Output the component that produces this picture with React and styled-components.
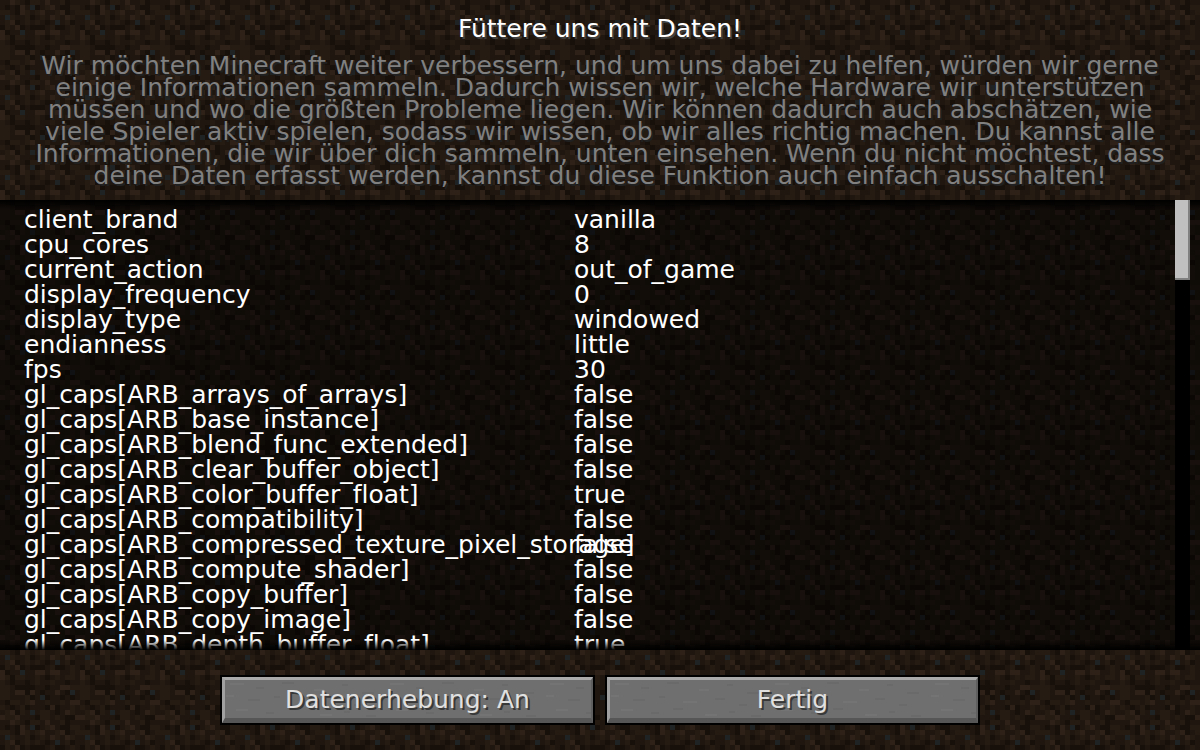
import { useState } from "react";
import styled, { createGlobalStyle } from "styled-components";

const dirt = [
    "bbdcbaccbdbbcabb",
    "babadbgabcdbaacc",
    "ccbadcbcdbbcdabc",
    "bgcbbcabcbdcbdcb",
    "bcdabcbcbabgbcab",
    "acbdabaaabcaabcb",
    "dabbgbbddbddbbcb",
    "dcaccbbcbabcbccb",
    "cbabbabcbbcbbabb",
    "ccbaaaabbabbddcc",
    "ccbddadbabbdbagb",
    "ccbbbcabgabbabab",
    "baccbcdbbcbbcbdd",
    "cbabcabbbadabbcb",
    "bcdacbgbccbabdcb",
    "dccdbbbaccbcbaad",
];

const dirtColors = {
    a: "#170f0a",
    b: "#1e160f",
    c: "#261b12",
    d: "#2e2118",
    g: "#1f2324",
};

const grains = [
    [8, 6, 14], [34, 10, 8], [60, 5, 12], [92, 12, 10], [120, 7, 6], [140, 15, 12],
    [4, 18, 8], [26, 22, 12], [52, 19, 6], [76, 24, 14], [108, 21, 10], [132, 27, 8],
    [14, 32, 12], [44, 35, 8], [66, 31, 10], [98, 37, 12], [122, 34, 6], [144, 38, 10],
];

const rows = [
    ["client_brand", "vanilla"],
    ["cpu_cores", "8"],
    ["current_action", "out_of_game"],
    ["display_frequency", "0"],
    ["display_type", "windowed"],
    ["endianness", "little"],
    ["fps", "30"],
    ["gl_caps[ARB_arrays_of_arrays]", "false"],
    ["gl_caps[ARB_base_instance]", "false"],
    ["gl_caps[ARB_blend_func_extended]", "false"],
    ["gl_caps[ARB_clear_buffer_object]", "false"],
    ["gl_caps[ARB_color_buffer_float]", "true"],
    ["gl_caps[ARB_compatibility]", "false"],
    ["gl_caps[ARB_compressed_texture_pixel_storage]", "false"],
    ["gl_caps[ARB_compute_shader]", "false"],
    ["gl_caps[ARB_copy_buffer]", "false"],
    ["gl_caps[ARB_copy_image]", "false"],
    ["gl_caps[ARB_depth_buffer_float]", "true"],
];

const intro = [
    "Wir möchten Minecraft weiter verbessern, und um uns dabei zu helfen, würden wir gerne",
    "einige Informationen sammeln. Dadurch wissen wir, welche Hardware wir unterstützen",
    "müssen und wo die größten Probleme liegen. Wir können dadurch auch abschätzen, wie",
    "viele Spieler aktiv spielen, sodass wir wissen, ob wir alles richtig machen. Du kannst alle",
    "Informationen, die wir über dich sammeln, unten einsehen. Wenn du nicht möchtest, dass",
    "deine Daten erfasst werden, kannst du diese Funktion auch einfach ausschalten!",
];

function DirtTexture() {
    return (
        <Texture aria-hidden="true" shapeRendering="crispEdges">
            <defs>
                <pattern id="dirt" width="80" height="80" patternUnits="userSpaceOnUse">
                    { dirt.map((line, y) => line.split("").map((cell, x) => (
                        <rect key={ `${x}-${y}` } x={ x * 5 } y={ y * 5 } width="5" height="5" fill={ dirtColors[cell] } />
                    ))) }
                </pattern>
            </defs>
            <rect width="100%" height="100%" fill="url(#dirt)" />
        </Texture>
    )
}

function StoneButton({ id, children, onClick }) {
    return (
        <Button onClick={ onClick }>
            <Stone aria-hidden="true" shapeRendering="crispEdges">
                <defs>
                    <pattern id={ id } width="160" height="44" patternUnits="userSpaceOnUse">
                        { grains.map(([x, y, w], i) => (
                            <rect key={ i } x={ x } y={ y } width={ w } height="2" fill={ i % 3 === 0 ? "#747474" : "#6a6a6a" } />
                        )) }
                    </pattern>
                </defs>
                <rect width="100%" height="100%" fill={ `url(#${id})` } />
            </Stone>
            <Label>{ children }</Label>
        </Button>
    )
}

export default function App() {

    const [enabled, setEnabled] = useState(true);
    const [offset, setOffset] = useState(0);

    function handleScroll(e) {
        const { scrollTop, scrollHeight, clientHeight } = e.currentTarget;
        const range = scrollHeight - clientHeight;
        setOffset(range > 0 ? (scrollTop / range) * (clientHeight - 80) : 0);
    }

    return (
        <>
            <GlobalStyle />
            <Page>
                <DirtTexture />
                <Header>
                    <Title>Füttere uns mit Daten!</Title>
                    <Intro>
                        { intro.map((line) => <Line key={ line }>{ line } </Line>) }
                    </Intro>
                </Header>
                <List>
                    <Viewport onScroll={ handleScroll }>
                        <Table>
                            <tbody>
                                { rows.map(([key, value]) => (
                                    <tr key={ key }>
                                        <Name scope="row">{ key }</Name>
                                        <Value>{ value }</Value>
                                    </tr>
                                )) }
                            </tbody>
                        </Table>
                    </Viewport>
                    <Track>
                        <Thumb style={ { transform: `translateY(${offset}px)` } } />
                    </Track>
                </List>
                <Footer>
                    <StoneButton id="stone-toggle" onClick={ () => setEnabled(!enabled) }>
                        Datenerhebung: { enabled ? "An" : "Aus" }
                    </StoneButton>
                    <StoneButton id="stone-done">Fertig</StoneButton>
                </Footer>
            </Page>
        </>
    )

}

const GlobalStyle = createGlobalStyle`
    * {
        box-sizing: border-box;
    }
    body {
        margin: 0;
        background-color: #1e160f;
        font-family: "DejaVu Sans", sans-serif;
        font-size: 25px;
        font-variant-ligatures: none;
    }
`
const Page = styled.div`
    position: relative;
    isolation: isolate;
    display: flex;
    flex-direction: column;
    height: 100vh;
    overflow: hidden;
`
const Texture = styled.svg`
    position: absolute;
    inset: 0;
    z-index: -1;
    width: 100%;
    height: 100%;
`
const Header = styled.header`
    padding: 14px 20px 13px;
    text-align: center;
`
const Title = styled.h1`
    margin: 0 0 11px;
    font-size: 25px;
    font-weight: 400;
    line-height: 30px;
    color: #ffffff;
    text-shadow: 2px 2px 0 #3f3f3f;
`
const Intro = styled.p`
    margin: 0;
    line-height: 22px;
    color: #808080;
    text-shadow: 2px 2px 0 #202020;
`
const Line = styled.span`
    display: block;
    white-space: nowrap;
`
const List = styled.main`
    position: relative;
    display: flex;
    flex: 1;
    min-height: 0;
    padding-right: 10px;
    background-color: rgba(0, 0, 0, 0.5);

    &::before,
    &::after {
        content: "";
        position: absolute;
        left: 0;
        right: 0;
        height: 10px;
        pointer-events: none;
    }
    &::before {
        top: 0;
        background: linear-gradient(#000000, transparent);
    }
    &::after {
        bottom: 0;
        background: linear-gradient(transparent, #000000);
    }
`
const Viewport = styled.div`
    flex: 1;
    min-width: 0;
    padding: 7px 0 0 24px;
    overflow-x: hidden;
    overflow-y: auto;
    scrollbar-width: none;
`
const Table = styled.table`
    width: calc(100% - 51px);
    table-layout: fixed;
    border-collapse: collapse;
    line-height: 25px;
    color: #ffffff;
`
const Name = styled.th`
    width: 50%;
    padding: 0;
    font-weight: 400;
    text-align: left;
    white-space: nowrap;
`
const Value = styled.td`
    padding: 0;
    white-space: nowrap;
`
const Track = styled.div`
    z-index: 1;
    width: 15px;
    background-color: #000000;
`
const Thumb = styled.div`
    height: 80px;
    background-color: #c0c0c0;
    border: solid #808080;
    border-width: 0 2px 2px 0;
`
const Footer = styled.footer`
    display: flex;
    justify-content: center;
    gap: 10px;
    padding: 25px 20px;
`
const Button = styled.button`
    position: relative;
    flex: 0 1 375px;
    height: 50px;
    padding: 0;
    border: 2px solid #000000;
    background-color: #6f6f6f;
    font-family: inherit;
    font-size: 25px;
    line-height: 30px;
    color: #e0e0e0;
    text-shadow: 2px 2px 0 #383838;
    cursor: pointer;

    &::after {
        content: "";
        position: absolute;
        inset: 0;
        border: solid;
        border-width: 3px 2px 5px 3px;
        border-color: #aaaaaa #5f5f5f #565656 #a0a0a0;
    }
`
const Stone = styled.svg`
    position: absolute;
    inset: 0;
    width: 100%;
    height: 100%;
`
const Label = styled.span`
    position: relative;
`
